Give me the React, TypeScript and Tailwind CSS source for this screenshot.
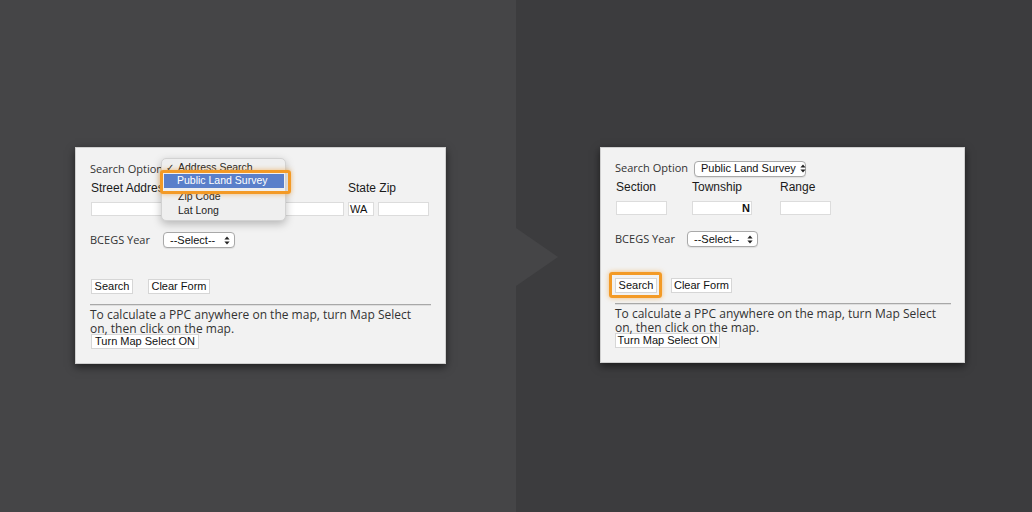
import React from "react";

const lucida = { fontFamily: '"Open Sans", "DejaVu Sans", sans-serif' };
const helv = { fontFamily: '"Liberation Sans", Arial, sans-serif' };

function UpDown() {
  return (
    <svg width="6" height="9" viewBox="0 0 6 9" className="ml-[4px] shrink-0">
      <path d="M3 0.5 L5.6 3.6 L0.4 3.6 Z" fill="#222" />
      <path d="M3 8.5 L5.6 5.4 L0.4 5.4 Z" fill="#222" />
    </svg>
  );
}

function SelectBox({ label, className = "" }: { label: string; className?: string }) {
  return (
    <div
      className={`flex h-[16px] shrink-0 items-center justify-between whitespace-nowrap rounded-[4px] border border-[#a9a9a9] bg-white pl-[6px] pr-[4px] text-[11px] text-[#111] shadow-[0_1px_1px_rgba(0,0,0,0.08)] ${className}`}
      style={helv}
    >
      <span className="leading-none">{label}</span>
      <UpDown />
    </div>
  );
}

function Btn({ label, className = "" }: { label: string; className?: string }) {
  return (
    <div
      className={`flex h-[15px] shrink-0 items-center justify-center whitespace-nowrap border border-[#d6d6d6] bg-white text-[11px] leading-none text-[#111] ${className}`}
      style={helv}
    >
      {label}
    </div>
  );
}

function Field({ className = "", children }: { className?: string; children?: React.ReactNode }) {
  return (
    <div
      className={`flex h-[14px] shrink-0 items-center border border-[#dcdcdc] bg-white text-[11px] leading-none text-[#111] ${className}`}
      style={helv}
    >
      {children}
    </div>
  );
}

function Note() {
  return (
    <div className="mt-[2px] h-[26px] whitespace-nowrap text-[12px] leading-[13px] text-[#333]" style={lucida}>
      <div className="h-[14px] leading-[14px]">To calculate a PPC anywhere on the map, turn Map Select</div>
      <div className="h-[12px] leading-[14px]">on, then click on the map.</div>
    </div>
  );
}

function LeftPanel() {
  return (
    <div className="relative h-[217px] w-[371px] border border-[#cfcfcf] bg-[#f2f2f2] shadow-[0_3px_8px_rgba(0,0,0,0.55)]">
      <div className="pl-[14px] pr-[14px] pt-[13px]">
        <div className="flex h-[16px] items-center">
          <span className="text-[11px] text-[#333]" style={lucida}>
            Search Option
          </span>
        </div>
        <div className="mt-[4px] flex h-[14px] items-center whitespace-nowrap text-[12px] text-[#1a1a1a]" style={helv}>
          <span className="ml-[1px] w-[257px]">Street Address</span>
          <span>State Zip</span>
        </div>
        <div className="mt-[7px] flex">
          <Field className="ml-[1px] w-[253px]" />
          <Field className="ml-[4px] w-[26px] pl-[1px]">WA</Field>
          <Field className="ml-[4px] w-[51px]" />
        </div>
        <div className="mt-[16px] flex items-center">
          <span className="w-[73px] text-[11px] text-[#333]" style={lucida}>
            BCEGS Year
          </span>
          <SelectBox label="--Select--" className="w-[72px]" />
        </div>
        <div className="mt-[30px] flex">
          <Btn label="Search" className="ml-[1px] w-[42px]" />
          <Btn label="Clear Form" className="ml-[15px] w-[62px]" />
        </div>
        <div className="mt-[10px] h-[2px] border-t border-[#a8a8a8] bg-[#dedede]" />
        <Note />
        <Btn label="Turn Map Select ON" className="ml-[1px] w-[108px]" />
      </div>

      {/* open option list of the Search Option select */}
      <div
        className="absolute left-[85px] top-[10px] h-[63px] w-[125px] whitespace-nowrap rounded-[5px] border border-[#d2d2d2] bg-[#efefef] text-[10.5px] text-[#222] shadow-[0_3px_8px_rgba(0,0,0,0.25)]"
        style={helv}
      >
        <div className="flex h-[15px] items-center pl-[4px] pt-[2px]">
          <span className="w-[12px] text-[10px]">✓</span>
          <span>Address Search</span>
        </div>
        <div className="mt-[3px] h-[13px] w-full" />
        <div className="flex h-[14px] items-center pl-[16px]">Zip Code</div>
        <div className="flex h-[14px] items-center pl-[16px]">Lat Long</div>
      </div>
      <div className="absolute left-[84px] top-[22px] flex h-[24px] w-[131px] rounded-[3px] border-[3px] border-[#f39a26] shadow-[0_0_5px_rgba(243,154,38,0.6)]">
        <div
          className="ml-[1px] mt-[1px] flex h-[14px] w-[120px] items-center whitespace-nowrap bg-[#5a7fca] pl-[13px] text-[10.5px] text-white"
          style={helv}
        >
          Public Land Survey
        </div>
      </div>
    </div>
  );
}

function RightPanel() {
  return (
    <div className="relative h-[216px] w-[365px] border border-[#cfcfcf] bg-[#f2f2f2] shadow-[0_3px_8px_rgba(0,0,0,0.55)]">
      <div className="pl-[14px] pr-[13px] pt-[12px]">
        <div className="flex h-[17px] items-center">
          <span className="w-[79px] shrink-0 text-[11px] text-[#333]" style={lucida}>
            Search Option
          </span>
          <SelectBox label="Public Land Survey" className="w-[112px]" />
        </div>
        <div className="mt-[3px] flex h-[14px] items-center whitespace-nowrap text-[12px] text-[#1a1a1a]" style={helv}>
          <span className="ml-[1px] w-[76px]">Section</span>
          <span className="w-[88px]">Township</span>
          <span>Range</span>
        </div>
        <div className="mt-[7px] flex">
          <Field className="ml-[1px] w-[51px]" />
          <Field className="ml-[25px] w-[60px] justify-end pr-[1px] font-bold">N</Field>
          <Field className="ml-[28px] w-[51px]" />
        </div>
        <div className="mt-[16px] flex items-center">
          <span className="w-[72px] text-[11px] text-[#333]" style={lucida}>
            BCEGS Year
          </span>
          <SelectBox label="--Select--" className="w-[71px]" />
        </div>
        <div className="mt-[30px] flex">
          <div className="relative">
            <Btn label="Search" className="w-[42px] bg-[#f6f6f6]" />
            <div className="absolute -left-[6px] -top-[6px] h-[26px] w-[53px] rounded-[3px] border-[3px] border-[#f39a26] shadow-[0_0_5px_rgba(243,154,38,0.6)]" />
          </div>
          <Btn label="Clear Form" className="ml-[14px] w-[61px]" />
        </div>
        <div className="mt-[10px] h-[2px] border-t border-[#a8a8a8] bg-[#dedede]" />
        <Note />
        <Btn label="Turn Map Select ON" className="w-[105px]" />
      </div>
    </div>
  );
}

export default function App() {
  return (
    <div className="relative flex h-[512px] w-[1032px] overflow-hidden">
      <div className="h-full w-[516px] bg-[#454547] pl-[75px] pt-[147px]">
        <LeftPanel />
      </div>
      <div className="h-full flex-1 bg-[#3c3c3e] pl-[84px] pt-[147px]">
        <RightPanel />
      </div>
      {/* step arrow joining the two halves */}
      <svg className="absolute left-[516px] top-[228px]" width="44" height="58" viewBox="0 0 44 58">
        <path d="M0 0 L42 29 L0 58 Z" fill="#454547" />
      </svg>
    </div>
  );
}
